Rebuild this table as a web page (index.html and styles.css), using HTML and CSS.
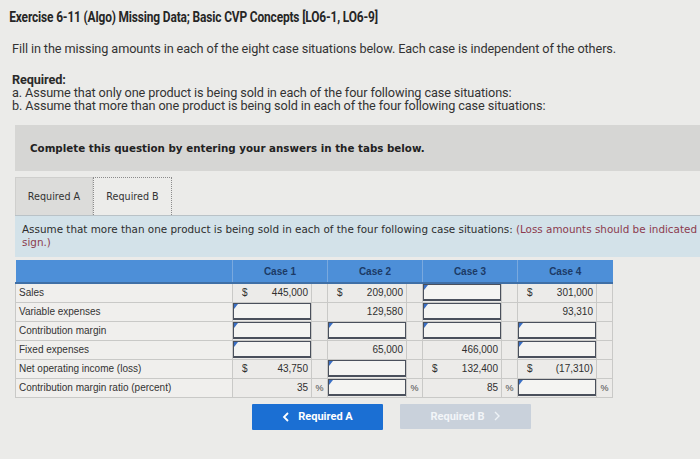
FILE: index.html
```html
<!DOCTYPE html>
<html>
<head>
<meta charset="utf-8">
<link rel="stylesheet" href="styles.css">
</head>
<body>
<h1 class="title">Exercise 6-11 (Algo) Missing Data; Basic CVP Concepts [LO6-1, LO6-9]</h1>
<p class="intro">Fill in the missing amounts in each of the eight case situations below. Each case is independent of the others.</p>
<div class="req">
  <div class="req-head">Required:</div>
  <div>a. Assume that only one product is being sold in each of the four following case situations:</div>
  <div>b. Assume that more than one product is being sold in each of the four following case situations:</div>
</div>

<div class="panel">
  <div class="complete">Complete this question by entering your answers in the tabs below.</div>
  <div class="tabs">
    <div class="tab">Required A</div>
    <div class="tab active">Required B</div>
  </div>
  <div class="instr">Assume that more than one product is being sold in each of the four following case situations: <span class="note">(Loss amounts should be indicated with a minus sign.)</span></div>

  <table class="grid">
    <colgroup>
      <col class="c-label">
      <col class="c-val"><col class="c-pct">
      <col class="c-val"><col class="c-pct">
      <col class="c-val"><col class="c-pct">
      <col class="c-val"><col class="c-pct">
    </colgroup>
    <thead>
      <tr><th class="blank"></th><th colspan="2">Case 1</th><th colspan="2">Case 2</th><th colspan="2">Case 3</th><th colspan="2">Case 4</th></tr>
    </thead>
    <tbody>
      <tr>
        <td class="lbl">Sales</td>
        <td class="val"><span class="cur">$</span><span class="num">445,000</span></td><td class="pct"></td>
        <td class="val"><span class="cur">$</span><span class="num">209,000</span></td><td class="pct"></td>
        <td class="val"><div class="inp"></div></td><td class="pct"></td>
        <td class="val"><span class="cur">$</span><span class="num">301,000</span></td><td class="pct"></td>
      </tr>
      <tr>
        <td class="lbl">Variable expenses</td>
        <td class="val"><div class="inp"></div></td><td class="pct"></td>
        <td class="val"><span class="num">129,580</span></td><td class="pct"></td>
        <td class="val"><div class="inp"></div></td><td class="pct"></td>
        <td class="val"><span class="num">93,310</span></td><td class="pct"></td>
      </tr>
      <tr>
        <td class="lbl">Contribution margin</td>
        <td class="val"><div class="inp"></div></td><td class="pct"></td>
        <td class="val"><div class="inp"></div></td><td class="pct"></td>
        <td class="val"><div class="inp"></div></td><td class="pct"></td>
        <td class="val"><div class="inp"></div></td><td class="pct"></td>
      </tr>
      <tr>
        <td class="lbl">Fixed expenses</td>
        <td class="val"><div class="inp"></div></td><td class="pct"></td>
        <td class="val"><span class="num">65,000</span></td><td class="pct"></td>
        <td class="val"><span class="num">466,000</span></td><td class="pct"></td>
        <td class="val"><div class="inp"></div></td><td class="pct"></td>
      </tr>
      <tr>
        <td class="lbl">Net operating income (loss)</td>
        <td class="val"><span class="cur">$</span><span class="num">43,750</span></td><td class="pct"></td>
        <td class="val"><div class="inp"></div></td><td class="pct"></td>
        <td class="val"><span class="cur">$</span><span class="num">132,400</span></td><td class="pct"></td>
        <td class="val"><span class="cur">$</span><span class="num">(17,310)</span></td><td class="pct"></td>
      </tr>
      <tr>
        <td class="lbl">Contribution margin ratio (percent)</td>
        <td class="val"><span class="num">35</span></td><td class="pct">%</td>
        <td class="val"><div class="inp"></div></td><td class="pct">%</td>
        <td class="val"><span class="num">85</span></td><td class="pct">%</td>
        <td class="val"><div class="inp"></div></td><td class="pct">%</td>
      </tr>
    </tbody>
  </table>

  <div class="nav">
    <button class="btn prev"><svg width="8" height="10" viewBox="0 0 8 10"><path d="M6 1 L2 5 L6 9" fill="none" stroke="#fff" stroke-width="1.8"/></svg>Required A</button>
    <button class="btn next">Required B<svg width="8" height="10" viewBox="0 0 8 10"><path d="M2 1 L6 5 L2 9" fill="none" stroke="#eef2f6" stroke-width="1.4"/></svg></button>
  </div>
</div>
</body>
</html>
```

FILE: styles.css
```css
html, body {
  margin: 0;
  padding: 0;
}
body {
  background: #ebebe9;
  color: #2b2b2b;
  font-family: Roboto, "Liberation Sans", sans-serif;
  width: 700px;
  height: 459px;
  overflow: hidden;
}
.title {
  margin: 0;
  padding: 7px 0 0 12px;
  font-size: 15.5px;
  font-weight: 700;
  line-height: 20px;
  color: #262626;
  letter-spacing: -0.2px;
  white-space: nowrap;
  transform: scaleX(0.77);
  transform-origin: 0 0;
}
.intro {
  margin: 15px 0 0 12px;
  font-size: 12.7px;
  line-height: 14px;
  color: #333;
  white-space: nowrap;
  letter-spacing: -0.1px;
}
.req {
  margin: 17px 0 0 12px;
  font-size: 12.7px;
  line-height: 13px;
  color: #333;
  white-space: nowrap;
  letter-spacing: -0.1px;
}
.req-head {
  font-weight: 700;
  color: #2a2a2a;
}
.panel {
  margin: 13px 0 0 15px;
  width: 800px;
}
.complete {
  background: #d6d6d4;
  height: 46px;
  padding-left: 15px;
  display: flex;
  align-items: center;
  font-family: "DejaVu Sans", Verdana, sans-serif;
  font-weight: 700;
  font-size: 10.3px;
  color: #222;
  white-space: nowrap;
}
.tabs {
  display: flex;
  margin-top: 6px;
  height: 38px;
  border-bottom: 1px solid #b9c2c7;
}
.tab {
  display: flex;
  align-items: center;
  justify-content: center;
  box-sizing: border-box;
  width: 78px;
  font-family: "DejaVu Sans", Verdana, sans-serif;
  font-size: 9.6px;
  color: #333;
  white-space: nowrap;
  background: #dcdcda;
  border: 1px solid #cfcfcd;
  border-bottom: none;
}
.tab.active {
  background: #ececea;
  border: 1px dotted #8b8b8b;
  border-bottom: none;
  width: 79px;
}
.instr {
  background: #d3e2e9;
  height: 41px;
  box-sizing: border-box;
  padding: 7px 0 0 7px;
  font-family: "DejaVu Sans", Verdana, sans-serif;
  font-size: 10.4px;
  line-height: 13px;
  color: #2d2d2d;
  width: 772px;
}
.instr .note {
  color: #8c3b4e;
}
.grid {
  margin-top: 3px;
  border-collapse: collapse;
  table-layout: fixed;
  width: 597px;
  font-family: "Liberation Sans", Arial, sans-serif;
  font-size: 10px;
  color: #2f2f2f;
}
.c-label { width: 217px; }
.c-val { width: 79px; }
.c-pct { width: 16px; }
.grid th {
  background: #4d8fd8;
  height: 22px;
  padding: 0;
  color: #1c3a66;
  font-weight: 700;
  font-size: 10px;
  border-left: 1px solid #7aa9de;
  border-bottom: 2px solid #3f6fa6;
}
.grid th.blank {
  border-left: none;
}
.grid td {
  height: 19px;
  padding: 0;
  border: 1px solid #c9c9c7;
  box-sizing: border-box;
  background: #ecebe9;
}
.grid td.lbl {
  padding-left: 3px;
  background: #f0efed;
  color: #333;
}
.grid td.val {
  position: relative;
}
.grid td.val .cur {
  position: absolute;
  left: 9px;
  top: 3px;
}
.grid td.val .num {
  display: block;
  text-align: right;
  padding-right: 3px;
}
.grid td.pct {
  text-align: center;
  color: #444;
  font-size: 9px;
}
.inp {
  position: relative;
  height: 17px;
  box-sizing: border-box;
  border: 1px solid #4a505c;
  border-bottom-width: 2px;
  background: #f4f4f2;
}
.inp::before {
  content: "";
  position: absolute;
  left: 0;
  top: 0;
  border-top: 5px solid #3a6fc4;
  border-right: 4px solid transparent;
}
.nav {
  display: flex;
  gap: 17px;
  padding-left: 237px;
  margin-top: 6px;
}
.btn {
  width: 131px;
  height: 26px;
  border: none;
  border-radius: 1px;
  font-family: Roboto, "Liberation Sans", sans-serif;
  font-weight: 700;
  font-size: 11px;
  display: flex;
  align-items: center;
  justify-content: center;
  gap: 8px;
  padding: 0;
}
.btn.prev {
  background: #1b6fd3;
  color: #fff;
}
.btn.next {
  background: #c9d1db;
  color: #f2f5f8;
  height: 25px;
}
```
